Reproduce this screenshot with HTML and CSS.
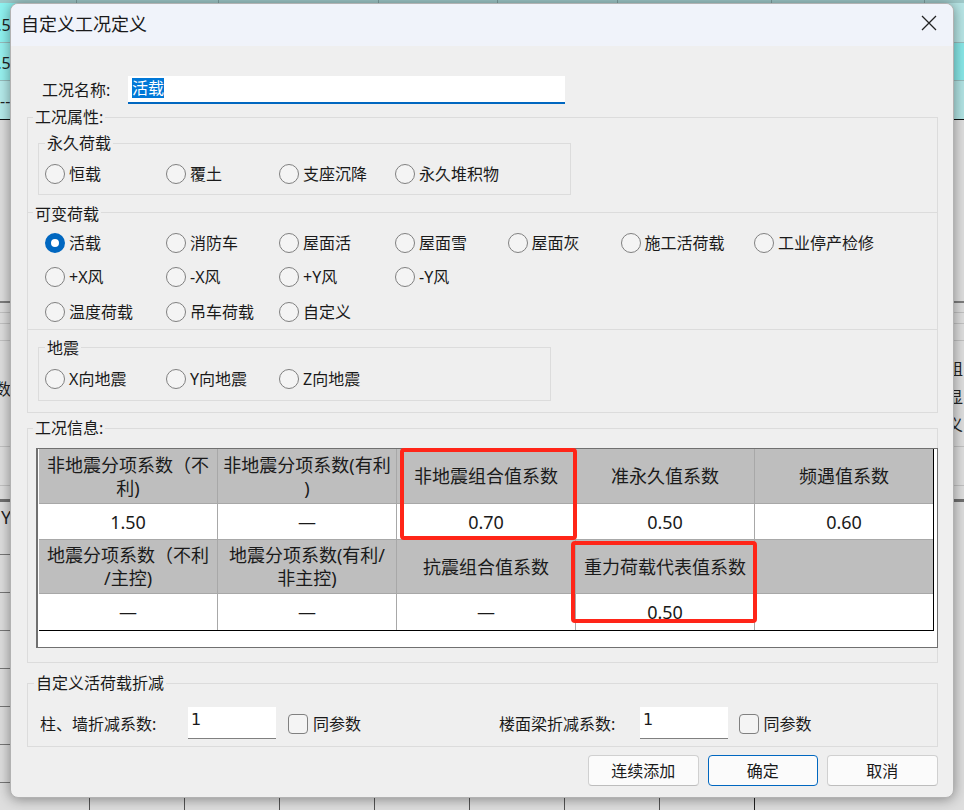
FILE: index.html
```html
<!DOCTYPE html>
<html lang="zh-CN">
<head>
<meta charset="utf-8">
<title>自定义工况定义</title>
<link rel="stylesheet" href="styles.css">
</head>
<body>
<div class="backdrop">
  <div class="bg-top"><i></i><i></i><i></i><i></i><i></i><i></i><i></i></div>
  <div class="bg-cyan c1"><span>1.5</span></div>
  <div class="bg-cyan c2"><span>1.5</span></div>
  <div class="bg-cyan c3"><span>--</span></div>
  <div class="bg-gray g1"></div>
  <div class="bg-gray g2"></div>
  <div class="bg-gray g3"></div>
  <div class="bg-gray g4"></div>
  <div class="bg-gray g5"><span class="left-word">数</span><span class="right-words">组<br>显<br>义</span></div>
  <div class="bg-gray g6"></div>
  <div class="bg-gray g7"></div>
  <div class="bg-gray g8"><span class="y-word">Y</span></div>
  <div class="bg-lines"><i></i><i></i><i></i><i></i><i></i><i></i></div>
  <div class="bg-bottom"><i></i><i></i><i></i><i></i><i></i><i></i><i></i><i></i></div>
</div>

<section class="dialog">
  <header class="titlebar">
    <h1 class="title">自定义工况定义</h1>
    <svg class="close" width="16" height="16" viewBox="0 0 16 16"><path d="M1 1 L15 15 M15 1 L1 15" fill="none" stroke="#222" stroke-width="1.25"/></svg>
  </header>

  <div class="content">
    <div class="name-row">
      <span class="name-label">工况名称:</span>
      <div class="name-field"><span class="selected">活载</span></div>
    </div>

    <fieldset class="group props">
      <legend>工况属性:</legend>

      <fieldset class="group permanent">
        <legend>永久荷载</legend>
        <div class="radios">
          <label class="radio"><input type="radio" name="kind">恒载</label>
          <label class="radio"><input type="radio" name="kind">覆土</label>
          <label class="radio"><input type="radio" name="kind">支座沉降</label>
          <label class="radio"><input type="radio" name="kind">永久堆积物</label>
        </div>
      </fieldset>

      <fieldset class="group variable">
        <legend>可变荷载</legend>
        <div class="radios variable-radios">
          <label class="radio"><input type="radio" name="kind" checked>活载</label>
          <label class="radio"><input type="radio" name="kind">消防车</label>
          <label class="radio"><input type="radio" name="kind">屋面活</label>
          <label class="radio"><input type="radio" name="kind">屋面雪</label>
          <label class="radio"><input type="radio" name="kind">屋面灰</label>
          <label class="radio"><input type="radio" name="kind">施工活荷载</label>
          <label class="radio"><input type="radio" name="kind">工业停产检修</label>
          <label class="radio r-start"><input type="radio" name="kind">+X风</label>
          <label class="radio"><input type="radio" name="kind">-X风</label>
          <label class="radio"><input type="radio" name="kind">+Y风</label>
          <label class="radio"><input type="radio" name="kind">-Y风</label>
          <label class="radio r-start"><input type="radio" name="kind">温度荷载</label>
          <label class="radio"><input type="radio" name="kind">吊车荷载</label>
          <label class="radio"><input type="radio" name="kind">自定义</label>
        </div>
      </fieldset>

      <fieldset class="group quake">
        <legend>地震</legend>
        <div class="radios">
          <label class="radio"><input type="radio" name="kind">X向地震</label>
          <label class="radio"><input type="radio" name="kind">Y向地震</label>
          <label class="radio"><input type="radio" name="kind">Z向地震</label>
        </div>
      </fieldset>
    </fieldset>

    <fieldset class="group info">
      <legend>工况信息:</legend>
      <div class="frame">
        <div class="coef-grid">
          <div class="cell head">非地震分项系数（不<br>利)</div>
          <div class="cell head">非地震分项系数(有利<br>)</div>
          <div class="cell head">非地震组合值系数</div>
          <div class="cell head">准永久值系数</div>
          <div class="cell head">频遇值系数</div>
          <div class="cell val">1.50</div>
          <div class="cell val">—</div>
          <div class="cell val">0.70</div>
          <div class="cell val">0.50</div>
          <div class="cell val">0.60</div>
          <div class="cell head">地震分项系数（不利<br>/主控)</div>
          <div class="cell head">地震分项系数(有利/<br>非主控)</div>
          <div class="cell head">抗震组合值系数</div>
          <div class="cell head">重力荷载代表值系数</div>
          <div class="cell head"></div>
          <div class="cell val">—</div>
          <div class="cell val">—</div>
          <div class="cell val">—</div>
          <div class="cell val">0.50</div>
          <div class="cell val"></div>
        </div>
        <div class="mark mark-a"></div>
        <div class="mark mark-b"></div>
      </div>
    </fieldset>

    <fieldset class="group reduce">
      <legend>自定义活荷载折减</legend>
      <div class="reduce-row">
        <div class="reduce-item first">
          <span class="reduce-label col">柱、墙折减系数:</span>
          <div class="num-field">1</div>
          <label class="check"><input type="checkbox">同参数</label>
        </div>
        <div class="reduce-item second">
          <span class="reduce-label beam">楼面梁折减系数:</span>
          <div class="num-field">1</div>
          <label class="check"><input type="checkbox">同参数</label>
        </div>
      </div>
    </fieldset>

    <div class="actions">
      <button class="btn" type="button">连续添加</button>
      <button class="btn primary" type="button">确定</button>
      <button class="btn" type="button">取消</button>
    </div>
  </div>
</section>
</body>
</html>
```

FILE: styles.css
```css
* { box-sizing: border-box; }
html, body { margin: 0; padding: 0; }
body {
  position: relative;
  width: 964px;
  height: 810px;
  overflow: hidden;
  background: #dedede;
  color: #1a1a1a;
  font-family: "Noto Sans", "Noto Sans CJK SC", sans-serif;
  font-size: 16px;
}

/* window behind the dialog */
.backdrop { width: 964px; height: 810px; overflow: hidden; font-size: 16px; color: #222; }
.bg-top { display: flex; height: 3px; background: #9fc9c9; }
.bg-top i { height: 3px; border-right: 1px solid #7f9f9f; }
.bg-top i:nth-child(1) { width: 77px; }
.bg-top i:nth-child(2) { width: 142px; }
.bg-top i:nth-child(3) { width: 160px; }
.bg-top i:nth-child(4) { width: 119px; }
.bg-top i:nth-child(5) { width: 120px; }
.bg-top i:nth-child(6) { width: 154px; }
.bg-top i:nth-child(7) { width: 153px; }
.bg-cyan { border-bottom: 1px solid #98bcbc; }
.bg-cyan span { display: block; margin-left: -12px; width: 40px; }
.c1 { height: 40px; line-height: 44px; background: linear-gradient(90deg, #8ff3f1, #b8e6e6); }
.c2 { height: 38px; line-height: 40px; background: linear-gradient(90deg, #98f2f0, #88e8e8); }
.c3 { height: 39px; line-height: 40px; background: linear-gradient(90deg, #b6ecec, #b2e4e4); border-bottom-color: #111; }
.c3 span { margin-left: 0; }
.bg-gray { border-bottom: 1px solid #c2c2c2; background: #dfdfdf; }
.g1 { height: 183px; border-bottom: 2px solid #7e7e7e; }
.g2 { height: 10px; }
.g3 { height: 11px; }
.g4 { height: 17px; }
.g5 { height: 106px; display: flex; justify-content: space-between; }
.left-word { margin: 36px 0 0 -5px; line-height: 24px; }
.right-words { padding: 14px 1px 0 0; line-height: 28px; }
.g6 { height: 39px; }
.g7 { height: 16px; border-bottom: 3px solid #6f6f6f; }
.g8 { width: 120px; height: 53px; background: none; border-bottom: 1px solid #777; }
.y-word { display: block; padding-left: 1px; line-height: 30px; font-size: 18px; }
.bg-lines { height: 228px; }
.bg-lines i { display: block; width: 120px; height: 38px; border-bottom: 1px solid #777; }
.bg-bottom { display: flex; height: 12px; margin-top: 15px; }
.bg-bottom i { width: 95px; height: 12px; border-right: 1px solid #555; flex: none; }
.bg-bottom i:first-child { width: 90px; }
.bg-bottom i:last-child { border-right-color: #222; }

/* dialog */
.dialog {
  position: absolute;
  left: 10px;
  top: 3px;
  width: 944px;
  height: 795px;
  border: 1px solid #b2b2b2;
  border-radius: 8px;
  background: #efefef;
  box-shadow: 0 1px 13px rgba(0, 0, 0, .42);
  overflow: hidden;
}
.titlebar {
  display: flex;
  align-items: center;
  justify-content: space-between;
  height: 42px;
  padding: 0 16px 2px 10px;
  background: #f0f3fa;
}
.close { margin-top: -2px; }
.title { margin: 0; font-size: 18px; font-weight: 400; line-height: 28px; }
.content { padding: 30px 15px 0 16px; }

.name-row { display: flex; align-items: center; height: 28px; }
.name-label { width: 86px; margin-left: 15px; line-height: 24px; }
.name-field {
  width: 437px;
  height: 28px;
  padding: 2px 0 0 4px;
  background: #fff;
  border-bottom: 2px solid #0067c0;
  line-height: 20px;
}
.selected { display: inline-block; height: 20px; background: #0078d7; color: #fff; }

/* group boxes */
.group { min-width: 0; margin: 0; padding: 0; border: 1px solid #dcdcdc; }
.group > legend { margin-left: 5px; padding: 0 2px; line-height: 21px; height: 21px; }
.props { margin-top: 3px; padding-bottom: 11px; }
.permanent { width: 533px; margin: 5px 0 0 10px; padding: 6px 0 6px 6px; }
.permanent > legend { margin-left: 0; }
.variable { margin-top: 7px; padding: 3px 0 0 17px; border-width: 1px 0; }
.variable > legend { margin-left: -12px; line-height: 25px; }
.quake { width: 513px; margin: 7px 0 0 10px; padding: 7px 0 7px 6px; }
.quake > legend { margin-left: 0; line-height: 23px; }
.info { margin-top: 5px; padding: 9px 0 14px 8px; }
.info > legend { margin-left: -3px; }
.reduce { margin-top: 10px; padding: 13px 0 7px 12px; }
.reduce > legend { margin-left: -6px; }

.radios {
  display: grid;
  grid-template-columns: 121px 113px 116px 112.5px 113px 133.5px auto;
  height: 28px;
  align-items: center;
}
.variable-radios { height: auto; grid-template-rows: 34px 34px 35px; }
.r-start { grid-column: 1; }
.radio { display: flex; align-items: center; gap: 4px; white-space: nowrap; line-height: 22px; }
.radio input {
  appearance: none;
  flex: none;
  width: 20px;
  height: 20px;
  margin: 0;
  border: 1.5px solid #808080;
  border-radius: 50%;
  background: #f4f4f4;
}
.radio input:checked { border: 6px solid #0067c0; background: #fff; }

/* coefficient table */
.frame {
  position: relative;
  width: 902px;
  height: 200px;
  padding: 0 4px 16px 1px;
  border: solid #707070;
  border-width: 1px 1px 1px 2px;
  background: #fff;
  margin-right: -1px;
}
.coef-grid {
  display: grid;
  grid-template-columns: repeat(4, 179px) 178px;
  grid-template-rows: 55px 36px 54px 36px;
  border-bottom: 1px solid #000;
  border-right: 1px solid #000;
  width: 895px;
}
.cell {
  display: flex;
  align-items: center;
  justify-content: center;
  padding-top: 1px;
  border-right: 1px solid #a8a8a8;
  border-bottom: 1px solid #a8a8a8;
  text-align: center;
  font-size: 18px;
  line-height: 23px;
  white-space: nowrap;
}
.cell:nth-child(5n) { border-right: 0; }
.cell:nth-child(n+16) { border-bottom: 0; }
.head { background: #bebebe; }
.val { background: #fff; }
.mark {
  position: absolute;
  border: 4px solid #ff2518;
  border-radius: 4px;
}
.mark-a { left: 362px; top: -1px; width: 177px; height: 92px; }
.mark-b { left: 533px; top: 92px; width: 186px; height: 82px; }

/* reduction row */
.reduce-row { display: flex; }
.reduce-item { display: flex; align-items: center; height: 32px; }
.reduce-item.first { width: 459px; }
.reduce-label { line-height: 22px; padding-top: 1px; }
.reduce-label.col { width: 148px; }
.reduce-label.beam { width: 141px; }
.num-field {
  width: 88px;
  height: 32px;
  padding: 2px 0 0 3px;
  background: #fff;
  border-bottom: 1px solid #808080;
  line-height: 22px;
  font-family: "DejaVu Sans", sans-serif;
}
.check { display: flex; align-items: center; gap: 5px; margin: 1px 0 0 12px; line-height: 22px; }
.second .check { margin-left: 10.5px; }
.check input {
  appearance: none;
  width: 20px;
  height: 20px;
  margin: 0;
  border: 1.5px solid #808080;
  border-radius: 4px;
  background: #f4f4f4;
}

/* buttons */
.actions { display: flex; justify-content: flex-end; gap: 9px; margin: 8px 0.5px 0 0; }
.btn {
  width: 110.5px;
  height: 31px;
  padding: 0;
  border: 1px solid #d0d0d0;
  border-bottom-color: #bdbdbd;
  border-radius: 4px;
  background: #fbfbfb;
  color: #1a1a1a;
  font: inherit;
  line-height: 22px;
}
.btn.primary { border-color: #0067c0; }
```
